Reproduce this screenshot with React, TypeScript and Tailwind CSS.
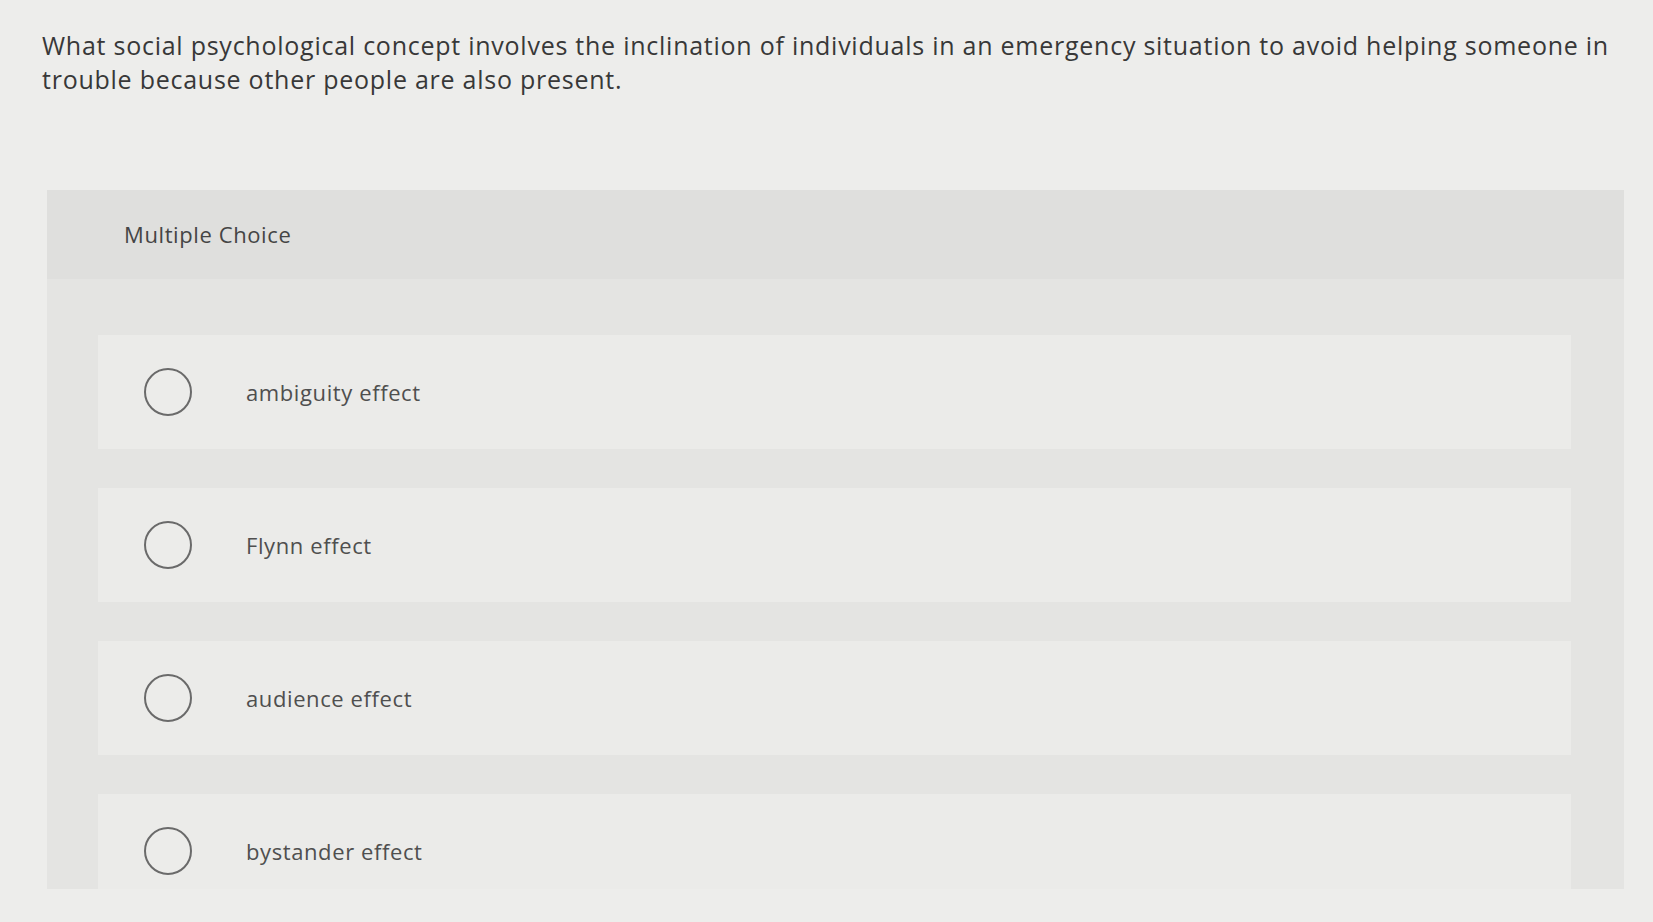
const OPTIONS = ['ambiguity effect', 'Flynn effect', 'audience effect', 'bystander effect'];

function Radio() {
  return (
    <span className="h-[48px] w-[48px] shrink-0 rounded-full border-2 border-[#6a6a6a] bg-[#ececea]" />
  );
}

export default function App() {
  return (
    <main
      className="min-h-[922px] w-full bg-[#ededeb] pt-[28px] text-[#3c3c3c]"
      style={{ fontFamily: '"Open Sans", Lato, sans-serif' }}
    >
      <p className="whitespace-nowrap pl-[42px] text-[25px] leading-[34px] tracking-[0.75px] text-[#383838]">
        What social psychological concept involves the inclination of individuals in an emergency situation to avoid helping someone in
        <br />
        trouble because other people are also present.
      </p>

      <section className="mt-[94px] ml-[47px] mr-[29px]">
        <div className="flex h-[89px] items-center bg-[#dfdfdd] pl-[77px] text-[22px] tracking-[0.6px] text-[#454545]">
          Multiple Choice
        </div>
        <ul className="flex h-[610px] flex-col gap-[39px] overflow-hidden bg-[#e4e4e2] pt-[56px] pl-[51px] pr-[53px]">
          {OPTIONS.map((o) => (
            <li key={o} className="flex h-[114px] shrink-0 items-center bg-[#ebebe9] pl-[46px]">
              <Radio />
              <span className="ml-[54px] text-[22px] tracking-[0.6px] text-[#4f4f4f]">{o}</span>
            </li>
          ))}
        </ul>
      </section>
    </main>
  );
}
